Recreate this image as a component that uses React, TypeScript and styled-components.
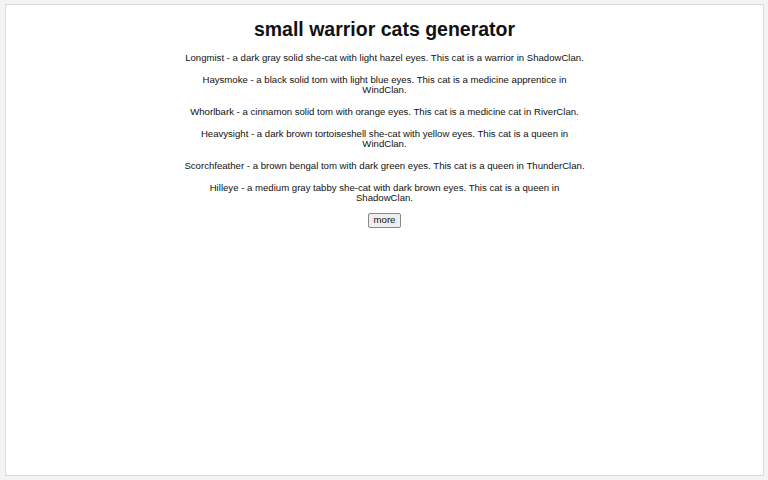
import React from "react";
import styled, { createGlobalStyle } from "styled-components";

const GlobalStyle = createGlobalStyle`
  html, body {
    margin: 0;
    padding: 0;
    background: #f3f3f3;
    font-family: "Liberation Sans", Arial, sans-serif;
    color: #111;
  }
`;

const Card = styled.main`
  box-sizing: border-box;
  margin: 4px 4px 4px 5px;
  height: 472px;
  background: #fff;
  border: 1px solid #dcdcdc;
  padding-top: 13px;
  text-align: center;
`;

const Title = styled.h1`
  margin: 0 0 13px;
  font-size: 19.5px;
  line-height: 22px;
  font-weight: bold;
`;

const List = styled.div`
  width: 402px;
  margin: 0 auto;
`;

const Cat = styled.p`
  margin: 0 0 10.8px;
  font-size: 9.6px;
  line-height: 10.8px;
`;

const More = styled.button`
  display: block;
  margin: -2px auto 0;
  font-family: "Liberation Sans", Arial, sans-serif;
  font-size: 9.6px;
  line-height: 12px;
  padding: 0 5px;
  height: 15px;
  color: #111;
  background: #efefef;
  border: 1px solid #888;
  border-radius: 2px;
`;

const cats = [
  "Longmist - a dark gray solid she-cat with light hazel eyes. This cat is a warrior in ShadowClan.",
  "Haysmoke - a black solid tom with light blue eyes. This cat is a medicine apprentice in WindClan.",
  "Whorlbark - a cinnamon solid tom with orange eyes. This cat is a medicine cat in RiverClan.",
  "Heavysight - a dark brown tortoiseshell she-cat with yellow eyes. This cat is a queen in WindClan.",
  "Scorchfeather - a brown bengal tom with dark green eyes. This cat is a queen in ThunderClan.",
  "Hilleye - a medium gray tabby she-cat with dark brown eyes. This cat is a queen in ShadowClan.",
];

export default function App() {
  return (
    <>
      <GlobalStyle />
      <Card>
        <Title>small warrior cats generator</Title>
        <List>
          {cats.map((c) => (
            <Cat key={c}>{c}</Cat>
          ))}
          <More>more</More>
        </List>
      </Card>
    </>
  );
}
